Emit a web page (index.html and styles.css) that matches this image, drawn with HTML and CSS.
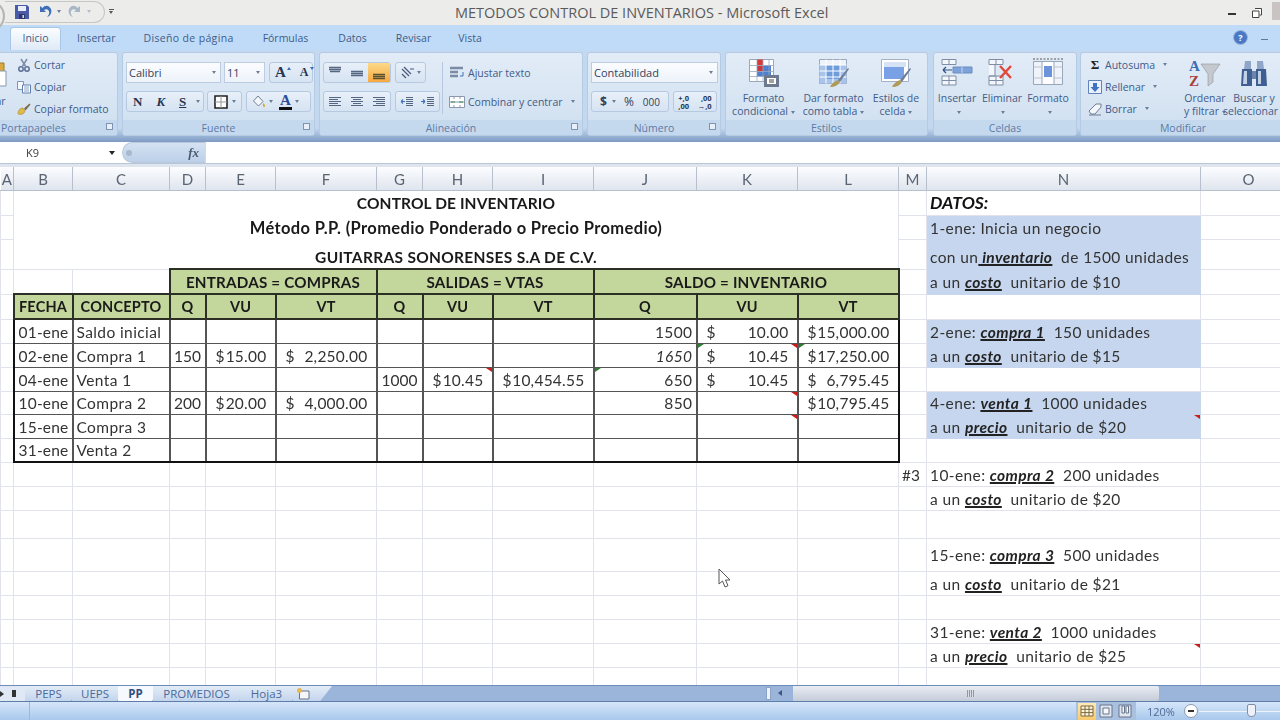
FILE: index.html
```
<!DOCTYPE html>
<html>
	<head>
		<title>METODOS CONTROL DE INVENTARIOS - Microsoft Excel</title>
		<link rel="stylesheet" href="styles.css">
	</head>

	<body>
		<div class="ventana">

			<!-- barra de titulo -->
			<div class="titulo">
				<i class="office"></i>
				<div class="acceso">
					<svg class="ic14" viewBox="0 0 14 14"><path d="M0 0h12l2 2v12H0z" fill="#4a5aa6"/><path d="M3 1h8v5H3z" fill="#e8eef8"/><path d="M4 9h6v5H4z" fill="#30386e"/><path d="M7.500 10h1.500v3H7.500z" fill="#cfd6ea"/></svg>
					<svg class="ic14 m-undo" viewBox="0 0 14 14"><path d="M2 1v6h6L6 5c3-2 6 0 5 4-.3 1-1 2-2 3 4-1 5-5 4-8C11 0 7-.5 4.500 3z" fill="#3f6fb8"/></svg>
					<i class="flechita"></i>
					<svg class="ic14 m-redo" viewBox="0 0 14 14"><path d="M12 1v6H6l2-2C5 3 2 5 3 9c.3 1 1 2 2 3C1 11 0 7 1 4c2-4 6-4.500 8.500-1z" fill="#a9b6c8"/></svg>
					<i class="flechita claro"></i>
				</div>
				<div class="personalizar"><i></i><i class="flechita"></i></div>
				<div class="nombre">METODOS CONTROL DE INVENTARIOS - Microsoft Excel</div>
				<div class="ventana-btns">
					<i class="minimizar"></i>
					<svg class="restaurar" viewBox="0 0 10 10"><path d="M3 .5h6.500V7H7.500M.5 3H7v6.500H.5z" fill="#fff" stroke="#444"/></svg>
					<i class="cerrar"></i>
				</div>
			</div>

			<!-- pestañas -->
			<div class="pestanas">
				<span class="pes activa">Inicio</span>
				<span class="pes p-ins">Insertar</span>
				<span class="pes p-dis">Diseño de página</span>
				<span class="pes p-for">Fórmulas</span>
				<span class="pes p-dat">Datos</span>
				<span class="pes p-rev">Revisar</span>
				<span class="pes p-vis">Vista</span>
				<span class="ayuda">?</span>
				<i class="min-cinta"></i>
			</div>

			<!-- cinta -->
			<div class="cinta">

				<div class="grupo g-port">
					<div class="cuerpo port">
						<div class="pegar">
							<svg class="ic-g" viewBox="0 0 32 30"><path d="M2 6h26v22H2z" fill="#d9a93f" stroke="#9c7a2a"/><path d="M10 2h10v6H10z" fill="#8c95a5"/><path d="M14 14h16v15H14z" fill="#fff" stroke="#8a98ae"/></svg>
							<span>Pegar</span>
						</div>
						<div class="lista">
							<div class="item">
								<svg class="ic14" viewBox="0 0 14 14"><circle cx="4" cy="11" r="2.200" fill="none" stroke="#5b6f96" stroke-width="1.500"/><circle cx="10" cy="11" r="2.200" fill="none" stroke="#5b6f96" stroke-width="1.500"/><path d="M5 9 10 1M9 9 4 1" stroke="#7d8ca8" stroke-width="1.500"/></svg>
								Cortar
							</div>
							<div class="item">
								<svg class="ic14" viewBox="0 0 14 14"><path d="M.5 1.500h6v8h-6z" fill="#f4f7fb" stroke="#7f94b4"/><path d="M5.500 5h8v8h-8z" fill="#fff" stroke="#5f7fae"/><path d="M7 7h5M7 9h5M7 11h5" stroke="#8aa3c6"/></svg>
								Copiar
							</div>
							<div class="item">
								<svg class="ic14" viewBox="0 0 14 14"><path d="M1 12c0-4 2-6 5-6l2 3c-1 3-3 4-7 3z" fill="#e0b94c" stroke="#a98a2c" stroke-width=".6"/><path d="M7 6.500 12.500 1.500l1 1L8.500 8.500z" fill="#7a6a4a"/></svg>
								Copiar formato
							</div>
						</div>
					</div>
					<div class="etiqueta">Portapapeles<i class="lanzador"></i></div>
				</div>

				<div class="grupo g-fuente">
					<div class="cuerpo filas">
						<div class="fila">
							<div class="combo c-fuente">Calibri<i class="flechita"></i></div>
							<div class="combo c-tam">11<i class="flechita"></i></div>
							<div class="caja c-ab">
								<b class="serif g">A</b><i class="sube"></i>
								<b class="serif p">A</b><i class="baja-t"></i>
							</div>
						</div>
						<div class="fila">
							<div class="caja c-nks">
								<b class="serif">N</b><b class="serif it">K</b><b class="serif sub">S</b><i class="flechita"></i>
							</div>
							<div class="caja c-borde">
								<svg class="ic14" viewBox="0 0 14 14"><path d="M1 1h12v12H1z" fill="#fff" stroke="#222" stroke-width="1.600"/><path d="M7 1v12M1 7h12" stroke="#999"/></svg>
								<i class="flechita"></i>
							</div>
							<div class="caja c-color">
								<svg class="ic14" viewBox="0 0 14 14"><path d="M6 1 1.500 6l5 5L11 6.500z" fill="#f5f7fb" stroke="#6d7f99"/><path d="M11.500 8c1 1.500 1.500 2 1.500 3s-1.500 1.500-2 0 0-2 .5-3z" fill="#e0a32e"/></svg>
								<i class="flechita"></i>
								<span class="a-color"><b class="serif">A</b></span>
								<i class="flechita"></i>
							</div>
						</div>
					</div>
					<div class="etiqueta">Fuente<i class="lanzador"></i></div>
				</div>

				<div class="grupo g-alin">
					<div class="cuerpo dos">
						<div class="filas">
							<div class="fila">
								<div class="caja c-alin">
									<span class="ali"><svg class="ic14" viewBox="0 0 14 14"><path d="M1 1.500h12M1 3.500h12M2 5.500h10" stroke="#556680" stroke-width="1.300"/></svg></span>
									<span class="ali"><svg class="ic14" viewBox="0 0 14 14"><path d="M1 5.500h12M1 7.500h12M1 9.500h12" stroke="#556680" stroke-width="1.300"/></svg></span>
									<span class="ali sel"><svg class="ic14" viewBox="0 0 14 14"><path d="M1 8.500h12M1 10.500h12M1 12.500h12" stroke="#5b5232" stroke-width="1.300"/></svg></span>
								</div>
								<div class="caja c-orient">
									<svg class="ic14" viewBox="0 0 14 14"><path d="M1 3 8 10M3 1 10 8M1 8l4 4" stroke="#4e5d78" stroke-width="1.300"/><path d="M9 3h4" stroke="#7b8aa5" stroke-width="1.300"/></svg>
									<i class="flechita"></i>
								</div>
							</div>
							<div class="fila">
								<div class="caja c-alin">
									<span class="ali"><svg class="ic14" viewBox="0 0 14 14"><path d="M1 2.500h12M1 4.500h9M1 6.500h12M1 8.500h9M1 10.500h12" stroke="#556680" stroke-width="1.100"/></svg></span>
									<span class="ali"><svg class="ic14" viewBox="0 0 14 14"><path d="M1 2.500h12M3 4.500h8M1 6.500h12M3 8.500h8M1 10.500h12" stroke="#556680" stroke-width="1.100"/></svg></span>
									<span class="ali"><svg class="ic14" viewBox="0 0 14 14"><path d="M1 2.500h12M4 4.500h9M1 6.500h12M4 8.500h9M1 10.500h12" stroke="#556680" stroke-width="1.100"/></svg></span>
								</div>
								<div class="caja c-sangria">
									<span class="ali"><svg class="ic14" viewBox="0 0 14 14"><path d="M6 2.500h7M6 4.500h7M6 6.500h7M6 8.500h7M6 10.500h7" stroke="#556680" stroke-width="1.100"/><path d="M5 6.500H1M1 6.500l2-2M1 6.500l2 2" stroke="#3f73b8" stroke-width="1.100"/></svg></span>
									<span class="ali"><svg class="ic14" viewBox="0 0 14 14"><path d="M6 2.500h7M6 4.500h7M6 6.500h7M6 8.500h7M6 10.500h7" stroke="#556680" stroke-width="1.100"/><path d="M0 6.500h4M4 6.500l-2-2M4 6.500l-2 2" stroke="#3f73b8" stroke-width="1.100"/></svg></span>
								</div>
							</div>
						</div>
						<div class="separador"></div>
						<div class="filas">
							<div class="fila item">
								<svg class="ic16" viewBox="0 0 16 14"><path d="M1 2h13M1 6h8M1 10h8" stroke="#7d8ca6" stroke-width="2.600"/><path d="M14 6v4h-3" fill="none" stroke="#3f73b8"/></svg>
								Ajustar texto
							</div>
							<div class="fila item">
								<svg class="ic16" viewBox="0 0 16 14"><path d="M.5 1.500h15v11H.5z" fill="#fff" stroke="#8a98ae"/><path d="M.5 7h15M5 1.500V4M11 1.500V4M5 10v2.500M11 10v2.500" stroke="#8a98ae"/><path d="M2 7h4M14 7h-4" stroke="#3a8a4a" stroke-width="1.200"/></svg>
								Combinar y centrar<i class="flechita"></i>
							</div>
						</div>
					</div>
					<div class="etiqueta">Alineación<i class="lanzador"></i></div>
				</div>

				<div class="grupo g-num">
					<div class="cuerpo filas">
						<div class="fila">
							<div class="combo c-formato">Contabilidad<i class="flechita"></i></div>
						</div>
						<div class="fila">
							<div class="caja c-mon"><b>$</b><i class="flechita"></i><span class="pct">%</span><span class="mil">000</span></div>
							<div class="caja c-dec"><span>+,0<br>,00</span><span>,00<br>→,0</span></div>
						</div>
					</div>
					<div class="etiqueta">Número<i class="lanzador"></i></div>
				</div>

				<div class="grupo g-est">
					<div class="cuerpo grandes">
						<div class="grande b-cond">
							<svg class="ic-g" viewBox="0 0 32 30"><path d="M1.500 1.500h24v22h-24z" fill="#fff" stroke="#9aa8bc"/><path d="M9 1.500h6v6H9z" fill="#d83a3a"/><path d="M9 7.500h6v6H9z" fill="#c8383c"/><path d="M9 13.500h14v5H9zM15 7.500h8v6h-8z" fill="#4f7fd0"/><path d="M1.500 7.500h24M1.500 13.500h24M1.500 18.500h24M9 1.500v22M15 1.500v22M21 1.500v22" fill="none" stroke="#9aa8bc" stroke-width=".8"/><path d="M16 17h15v12H16z" fill="#6d7a8e"/><path d="M19 20h9v6h-9z" fill="#fff"/><path d="M21 22h5M21 24h5" stroke="#444"/></svg>
							<span>Formato<br>condicional<i class="flechita"></i></span>
						</div>
						<div class="grande b-tabla">
							<svg class="ic-g" viewBox="0 0 32 30"><path d="M1.500 1.500h27v24h-27z" fill="#eef3fa" stroke="#9aa8bc"/><path d="M1.500 7h27V25.500h-27z" fill="#a9c4ea"/><path d="M8 7h14v14H8z" fill="#6f9ddc"/><path d="M1.500 7h27M1.500 13h27M1.500 19h27M8 1.500v24M15 1.500v24M22 1.500v24" fill="none" stroke="#fff"/><path d="M12 29c2-4 5-6 8-7l2 2c-2 3-5 5-10 5z" fill="#b09a5a"/><path d="M20 22 30 10l1 1-9 13z" fill="#6f7f98"/></svg>
							<span>Dar formato<br>como tabla<i class="flechita"></i></span>
						</div>
						<div class="grande b-celda">
							<svg class="ic-g" viewBox="0 0 32 30"><path d="M1.500 1.500h27v22h-27z" fill="#fff" stroke="#a4b1c4"/><path d="M4 4h22v5H4z" fill="#d6e3f6"/><path d="M4 9h20v12H4z" fill="#7aa0e6"/><path d="M12 29c2-4 5-6 8-7l2 2c-2 3-5 5-10 5z" fill="#b09a5a"/><path d="M20 22 30 10l1 1-9 13z" fill="#6f7f98"/></svg>
							<span>Estilos de<br>celda<i class="flechita"></i></span>
						</div>
					</div>
					<div class="etiqueta">Estilos</div>
				</div>

				<div class="grupo g-cel">
					<div class="cuerpo grandes">
						<div class="grande b-ins">
							<svg class="ic-g" viewBox="0 0 32 30"><path d="M1 1.500h14v5H1zM1 18h14v9H1z" fill="#f3f6fb" stroke="#7f8ea6"/><path d="M8 18v9M1 22.500h14M8 1.500v5" stroke="#7f8ea6"/><path d="M12 9h19v6H12z" fill="#7ea3da" stroke="#6a8cc2"/><path d="M21 9v6" stroke="#c6d6ef"/><path d="M11 12H2M2 12l3-3M2 12l3 3" fill="none" stroke="#30507f" stroke-width="1.200"/></svg>
							<span>Insertar<br><i class="flechita"></i></span>
						</div>
						<div class="grande b-eli">
							<svg class="ic-g" viewBox="0 0 32 30"><path d="M3 1.500h14v5H3zM3 18h14v9H3zM3 6.500h6V18H3" fill="#f3f6fb" stroke="#7f8ea6"/><path d="M10 18v9M3 22.500h14M10 1.500v5" stroke="#7f8ea6"/><path d="M14 8l11 12M25 8 14 20" stroke="#e0483a" stroke-width="2.400"/></svg>
							<span>Eliminar<br><i class="flechita"></i></span>
						</div>
						<div class="grande b-fmt">
							<svg class="ic-g" viewBox="0 0 32 30"><path d="M1 1h30" stroke="#555" stroke-dasharray="2 1.500"/><path d="M1.500 3.500h29v23h-29z" fill="#f0f4fa" stroke="#98a6ba"/><path d="M10 3.500h12v23H10z" fill="#fff" stroke="#98a6ba"/><path d="M12 8h8v11h-8z" fill="#6c94dd"/><path d="M1.500 9h8M1.500 20h8M22 9h8.500M22 20h8.500" stroke="#b6c2d2"/></svg>
							<span>Formato<br><i class="flechita"></i></span>
						</div>
					</div>
					<div class="etiqueta">Celdas</div>
				</div>

				<div class="grupo g-mod">
					<div class="cuerpo mod">
						<div class="lista">
							<div class="item"><b class="serif sigma">Σ</b>Autosuma<i class="flechita"></i></div>
							<div class="item">
								<svg class="ic14" viewBox="0 0 14 14"><path d="M.5.5h13v13H.5z" fill="#eaf1fb" stroke="#5f83bb"/><path d="M5 3h4v4h2.500L7 12 2.500 7H5z" fill="#3e72c4"/></svg>
								Rellenar<i class="flechita"></i>
							</div>
							<div class="item">
								<svg class="ic14" viewBox="0 0 14 14"><path d="M1 9 8 2h5v3l-6 7H3z" fill="#f4f6fa" stroke="#6f7d92"/><path d="M1 13h12" stroke="#6f7d92"/></svg>
								Borrar<i class="flechita"></i>
							</div>
						</div>
						<div class="grande b-ord">
							<svg class="ic-g" viewBox="0 0 32 30"><text x="0" y="13" class="az a1">A</text><text x="0" y="28" class="az a2">Z</text><path d="M12 6h19l-7 10v8l-5 4V16z" fill="#c4c9cf" stroke="#8d949c" stroke-width=".6"/></svg>
							<span>Ordenar<br>y filtrar<i class="flechita"></i></span>
						</div>
						<div class="grande b-bus">
							<svg class="ic-g" viewBox="0 0 32 30"><path d="M4 11h10v17H3zM18 11h10l1 17H18z" fill="#3f5f92"/><path d="M7 3h6v8H6zM19 3h6l1 8h-7z" fill="#8fa6c8"/><path d="M14 13h4v8h-4z" fill="#6c86ad"/><path d="M6 13h3v13H5z" fill="#c2d1e6"/><path d="M20 13h3v13h-3z" fill="#c2d1e6"/></svg>
							<span>Buscar y<br>seleccionar<i class="flechita"></i></span>
						</div>
					</div>
					<div class="etiqueta">Modificar</div>
				</div>

			</div>

			<!-- barra de formulas -->
			<div class="formulas">
				<div class="nombre-celda">K9<i class="flecha-negra"></i></div>
				<div class="fx-pill"><i class="punto"></i><span>fx</span></div>
				<div class="entrada"></div>
			</div>

			<!-- hoja -->
			<div class="hoja">
				<table>
					<colgroup>
						<col class="w13"><col class="w59"><col class="w97"><col class="w36"><col class="w70"><col class="w101"><col class="w46"><col class="w70"><col class="w101"><col class="w103"><col class="w101"><col class="w101"><col class="w28"><col class="w274"><col class="w96">
					</colgroup>
					<tr class="cab"><th>A</th><th>B</th><th>C</th><th>D</th><th>E</th><th>F</th><th>G</th><th>H</th><th>I</th><th>J</th><th>K</th><th>L</th><th>M</th><th>N</th><th>O</th></tr>

					<tr class="h25"><td></td><td colspan="11" class="tit">CONTROL DE INVENTARIO</td><td></td><td class="datos">DATOS:</td><td></td></tr>
					<tr class="h24"><td></td><td colspan="11" class="tit metodo">Método P.P. (Promedio Ponderado o Precio Promedio)</td><td></td><td class="azul">1-ene: Inicia un negocio</td><td></td></tr>
					<tr class="h30"><td></td><td colspan="11" class="tit baja">GUITARRAS SONORENSES S.A DE C.V.</td><td></td><td class="azul baja">con un<u class="k"> inventario</u>  de 1500 unidades</td><td></td></tr>
					<tr class="h25"><td></td><td></td><td></td><td colspan="3" class="enc">ENTRADAS = COMPRAS</td><td colspan="3" class="enc">SALIDAS = VTAS</td><td colspan="3" class="enc">SALDO = INVENTARIO</td><td></td><td class="azul">a un <u class="k">costo</u>  unitario de $10</td><td></td></tr>
					<tr class="h25 sub-enc"><td></td><td class="enc">FECHA</td><td class="enc">CONCEPTO</td><td class="enc">Q</td><td class="enc">VU</td><td class="enc">VT</td><td class="enc">Q</td><td class="enc">VU</td><td class="enc">VT</td><td class="enc">Q</td><td class="enc">VU</td><td class="enc">VT</td><td></td><td></td><td></td></tr>

					<tr class="h24">
						<td></td><td class="d ini">01-ene</td><td class="d">Saldo inicial</td><td class="d"></td><td class="d"></td><td class="d"></td><td class="d"></td><td class="d"></td><td class="d"></td>
						<td class="d num">1500</td><td class="d"><span class="con"><span>$</span><span>10.00</span></span></td><td class="d fin"><span class="con"><span>$</span><span>15,000.00</span></span></td>
						<td></td><td class="azul">2-ene: <u class="k">compra 1</u>  150 unidades</td><td></td>
					</tr>
					<tr class="h24">
						<td></td><td class="d ini">02-ene</td><td class="d">Compra 1</td><td class="d num c">150</td><td class="d"><span class="con"><span>$</span><span>15.00</span></span></td><td class="d"><span class="con"><span>$</span><span>2,250.00</span></span></td><td class="d"></td><td class="d"></td><td class="d"></td>
						<td class="d num it">1650</td><td class="d"><i class="tri verde izq"></i><i class="tri rojo"></i><span class="con"><span>$</span><span>10.45</span></span></td><td class="d fin"><i class="tri verde izq"></i><span class="con"><span>$</span><span>17,250.00</span></span></td>
						<td></td><td class="azul">a un <u class="k">costo</u>  unitario de $15</td><td></td>
					</tr>
					<tr class="h24">
						<td></td><td class="d ini">04-ene</td><td class="d">Venta 1</td><td class="d"></td><td class="d"></td><td class="d"></td><td class="d num c">1000</td><td class="d"><i class="tri rojo"></i><span class="con"><span>$</span><span>10.45</span></span></td><td class="d"><span class="con"><span>$</span><span>10,454.55</span></span></td>
						<td class="d num"><i class="tri verde izq"></i>650</td><td class="d"><span class="con"><span>$</span><span>10.45</span></span></td><td class="d fin"><span class="con"><span>$</span><span>6,795.45</span></span></td>
						<td></td><td></td><td></td>
					</tr>
					<tr class="h23">
						<td></td><td class="d ini">10-ene</td><td class="d">Compra 2</td><td class="d num c">200</td><td class="d"><span class="con"><span>$</span><span>20.00</span></span></td><td class="d"><span class="con"><span>$</span><span>4,000.00</span></span></td><td class="d"></td><td class="d"></td><td class="d"></td>
						<td class="d num">850</td><td class="d"><i class="tri rojo"></i></td><td class="d fin"><span class="con"><span>$</span><span>10,795.45</span></span></td>
						<td></td><td class="azul">4-ene: <u class="k">venta 1</u>  1000 unidades</td><td></td>
					</tr>
					<tr class="h24 negra">
						<td></td><td class="d ini">15-ene</td><td class="d">Compra 3</td><td class="d"></td><td class="d"></td><td class="d"></td><td class="d"></td><td class="d"></td><td class="d"></td>
						<td class="d"></td><td class="d"><i class="tri rojo"></i></td><td class="d fin"></td>
						<td></td><td class="azul"><i class="tri rojo"></i>a un <u class="k">precio</u>  unitario de $20</td><td></td>
					</tr>
					<tr class="h24 ultima">
						<td></td><td class="d ini">31-ene</td><td class="d">Venta 2</td><td class="d"></td><td class="d"></td><td class="d"></td><td class="d"></td><td class="d"></td><td class="d"></td>
						<td class="d"></td><td class="d"></td><td class="d fin"></td>
						<td></td><td></td><td></td>
					</tr>

					<tr class="h24"><td></td><td></td><td></td><td></td><td></td><td></td><td></td><td></td><td></td><td></td><td></td><td></td><td class="m">#3</td><td>10-ene: <u class="k">compra 2</u>  200 unidades</td><td></td></tr>
					<tr class="h24"><td></td><td></td><td></td><td></td><td></td><td></td><td></td><td></td><td></td><td></td><td></td><td></td><td></td><td>a un <u class="k">costo</u>  unitario de $20</td><td></td></tr>
					<tr class="h28"><td></td><td></td><td></td><td></td><td></td><td></td><td></td><td></td><td></td><td></td><td></td><td></td><td></td><td></td><td></td></tr>
					<tr class="h33"><td></td><td></td><td></td><td></td><td></td><td></td><td></td><td></td><td></td><td></td><td></td><td></td><td></td><td>15-ene: <u class="k">compra 3</u>  500 unidades</td><td></td></tr>
					<tr class="h24"><td></td><td></td><td></td><td></td><td></td><td></td><td></td><td></td><td></td><td></td><td></td><td></td><td></td><td>a un <u class="k">costo</u>  unitario de $21</td><td></td></tr>
					<tr class="h24"><td></td><td></td><td></td><td></td><td></td><td></td><td></td><td></td><td></td><td></td><td></td><td></td><td></td><td></td><td></td></tr>
					<tr class="h24"><td></td><td></td><td></td><td></td><td></td><td></td><td></td><td></td><td></td><td></td><td></td><td></td><td></td><td>31-ene: <u class="k">venta 2</u>  1000 unidades</td><td></td></tr>
					<tr class="h24"><td></td><td></td><td></td><td></td><td></td><td></td><td></td><td></td><td></td><td></td><td></td><td></td><td></td><td><i class="tri rojo"></i>a un <u class="k">precio</u>  unitario de $25</td><td></td></tr>
					<tr class="h24"><td></td><td></td><td></td><td></td><td></td><td></td><td></td><td></td><td></td><td></td><td></td><td></td><td></td><td></td><td></td></tr>
				</table>

				<svg class="cursor" viewBox="0 0 14 20"><path d="M1 1v15l3.500-3 2.500 6 3-1.300-2.500-5.700H12z" fill="#fff" stroke="#555"/></svg>
			</div>

			<!-- hojas y scroll -->
			<div class="barra-hojas">
				<div class="nav"><i class="tri-der"></i><i class="fin-der"></i></div>
				<div class="hoja-tab t1">PEPS</div>
				<div class="hoja-tab t2">UEPS</div>
				<div class="hoja-tab t3">PP</div>
				<div class="hoja-tab t4">PROMEDIOS</div>
				<div class="hoja-tab t5">Hoja3</div>
				<div class="hoja-tab t6">
					<svg class="ic14" viewBox="0 0 14 14"><path d="M3.500 4h9.500v8H3.500z" fill="#f4f6fa" stroke="#66758c"/><circle cx="3.500" cy="3.500" r="2.500" fill="#e9b64d"/></svg>
				</div>
				<div class="hueco"></div>
				<div class="divisor"></div>
				<i class="tri-izq"></i>
				<div class="scroll"><i class="agarre"></i></div>
			</div>

			<!-- estado -->
			<div class="estado">
				<i class="est-sep"></i>
				<div class="vistas">
					<span class="vista on"><svg class="ic14" viewBox="0 0 14 14"><path d="M1 2h12v10H1zM1 5.300h12M1 8.600h12M5 2v10M9 2v10" fill="#fff6d8" stroke="#7b6a45"/></svg></span>
					<span class="vista"><svg class="ic14" viewBox="0 0 14 14"><path d="M1 1h12v12H1z" fill="#dfe6f0" stroke="#66758c"/><path d="M4 4h6v6H4z" fill="#f7f9fc" stroke="#66758c"/></svg></span>
					<span class="vista"><svg class="ic14" viewBox="0 0 14 14"><path d="M1 1h12v12H1z" fill="#dfe6f0" stroke="#66758c"/><path d="M4 2h2.500v7H4zM8 2h2.500v7H8z" fill="#f7f9fc" stroke="#66758c"/></svg></span>
				</div>
				<span class="zoom-txt">120%</span>
				<span class="zoom-menos"></span>
				<div class="zoom-linea"><i class="zoom-pulgar"></i></div>
			</div>

		</div>
	</body>
</html>
```

FILE: styles.css
```
	html, body
	{
		margin: 0;
		padding: 0;
		background: #fff;
	}

	.ventana
	{
		width: 1280px;
		height: 720px;
		overflow: hidden;
		display: flex;
		flex-direction: column;
		font-family: "Open Sans", "Noto Sans", sans-serif;
		font-size: 10.5px;
		color: #3f5c88;
		filter: blur(0.4px);
	}

	i { font-style: normal; }

	svg { display: block; flex: none; }

	.ic14 { width: 14px; height: 14px; }
	.ic16 { width: 16px; height: 14px; }
	.ic-g { width: 32px; height: 30px; }

	.serif { font-family: "Liberation Serif", serif; }

	.flechita
	{
		display: inline-block;
		width: 0;
		height: 0;
		margin-left: 5px;
		vertical-align: middle;
		border-left: 2.500px solid transparent;
		border-right: 2.500px solid transparent;
		border-top: 3px solid #6b7d98;
	}

	.flechita.claro { border-top-color: #b3bdcb; }

	/* titulo */
	.titulo
	{
		height: 25px;
		flex: none;
		display: flex;
		align-items: center;
		position: relative;
		background: #ececea;
	}

	.office
	{
		position: absolute;
		left: -27px;
		top: 0;
		width: 28px;
		height: 28px;
		border-radius: 50%;
		border: 2px solid #b5b5b3;
		background: #ececea;
	}

	.acceso
	{
		width: 100px;
		height: 22px;
		margin-left: 5px;
		margin-top: -2px;
		padding-left: 10px;
		box-sizing: border-box;
		display: flex;
		align-items: center;
		border: 1px solid #c6c6c4;
		border-left: 0;
		border-radius: 0 12px 12px 0;
	}

	.m-undo { margin-left: 9px; }
	.m-redo { margin-left: 7px; }

	.personalizar { width: 8px; margin-left: 4px; margin-top: -2px; }
	.personalizar i:first-child { display: block; width: 5px; height: 1px; background: #555; margin-bottom: 1px; }
	.personalizar .flechita { display: block; margin-left: 0; border-top-color: #555; }

	.nombre
	{
		width: 373px;
		margin-left: 338px;
		font-size: 14.500px;
		color: #5a5a5a;
		white-space: nowrap;
		text-align: center;
	}

	.ventana-btns
	{
		margin-left: auto;
		display: flex;
		align-items: center;
	}

	.minimizar { width: 8px; height: 2px; margin-top: 3px; background: #333; }
	.restaurar { width: 10px; height: 10px; margin-left: 16px; }
	.cerrar { width: 8px; height: 18px; margin-left: 10px; margin-top: -4px; background: #c9c4c2; }

	/* pestañas */
	.pestanas
	{
		height: 25px;
		flex: none;
		display: flex;
		align-items: center;
		background: #bfdbf8;
		font-size: 10.5px;
	}

	.pes { white-space: nowrap; }

	.pes.activa
	{
		width: 49px;
		height: 22px;
		margin-left: 11px;
		margin-top: 3px;
		line-height: 21px;
		text-align: center;
		background: linear-gradient(#fbfdff, #dfeaf7);
		border-radius: 3px 3px 0 0;
		box-shadow: 0 0 0 1px #a9c6e6;
	}

	.p-ins { margin-left: 17px; }
	.p-dis { margin-left: 28px; letter-spacing: .35px; }
	.p-for { margin-left: 29px; }
	.p-dat { margin-left: 30px; }
	.p-rev { margin-left: 29px; }
	.p-vis { margin-left: 27px; }

	.ayuda
	{
		width: 13px;
		height: 13px;
		margin-left: auto;
		border-radius: 50%;
		background: #4a78c4;
		border: 1px solid #9fb8db;
		color: #fff;
		font-size: 9px;
		font-weight: 700;
		line-height: 13px;
		text-align: center;
	}

	.min-cinta { width: 7px; height: 1px; margin: 3px 12px 0 13px; background: #66788f; }

	/* cinta */
	.cinta
	{
		height: 92px;
		flex: none;
		box-sizing: border-box;
		padding-top: 2px;
		display: flex;
		background: linear-gradient(#c2d9f1, #c3d8ee 85%, #8aa6cc 97%, #7f9bc3);
		white-space: nowrap;
	}

	.grupo
	{
		height: 84px;
		flex: none;
		box-sizing: border-box;
		margin-right: 4px;
		display: flex;
		flex-direction: column;
		border: 1px solid #b5cbe3;
		border-radius: 3px;
		background: linear-gradient(#e2ecf7, #cfdff0);
		overflow: hidden;
	}

	.g-port { width: 144px; margin-left: -26px; }
	.g-fuente { width: 193px; }
	.g-alin { width: 264px; }
	.g-num { width: 134px; }
	.g-est { width: 203px; margin-right: 5px; }
	.g-cel { width: 144px; margin-right: 3px; }
	.g-mod { width: 205px; margin-right: 0; border-right: 0; }

	.cuerpo { height: 67px; flex: none; box-sizing: border-box; }

	.etiqueta
	{
		flex: 1;
		position: relative;
		padding-top: 1px;
		line-height: 14px;
		text-align: center;
		background: #c5d9ee;
		color: #5c7ba6;
	}

	.g-port .etiqueta { text-align: left; padding-left: 26px; }

	.lanzador
	{
		position: absolute;
		right: 4px;
		top: 3px;
		width: 5px;
		height: 5px;
		border: 1px solid #7f94b4;
		background: #e8eff8;
	}

	.cuerpo.port { display: flex; }

	.pegar
	{
		width: 33px;
		flex: none;
		padding-top: 4px;
		box-sizing: border-box;
		display: flex;
		flex-direction: column;
		align-items: center;
		line-height: 13px;
	}

	.pegar span { margin-top: 8px; }

	.lista
	{
		display: flex;
		flex-direction: column;
		gap: 7px;
		padding: 4px 0 0 9px;
	}

	.item
	{
		height: 15px;
		display: flex;
		align-items: center;
		gap: 3px;
		white-space: nowrap;
		font-size: 10.5px;
	}

	.item .flechita { margin-left: 5px; }

	.filas
	{
		display: flex;
		flex-direction: column;
		gap: 8px;
		padding: 9px 0 0 3px;
	}

	.fila { height: 21px; display: flex; gap: 3px; }

	.combo
	{
		height: 21px;
		box-sizing: border-box;
		padding-left: 2px;
		display: flex;
		align-items: center;
		justify-content: space-between;
		background: linear-gradient(#fbfcfe, #edf3fa);
		border: 1px solid #bccde2;
		color: #33425c;
		font-size: 11px;
	}

	.combo .flechita { margin-right: 4px; }

	.c-fuente { width: 95px; }
	.c-tam { width: 41px; }
	.c-formato { width: 127px; }

	.caja
	{
		height: 21px;
		box-sizing: border-box;
		display: flex;
		align-items: center;
		border: 1px solid #b6c9e0;
		border-radius: 3px;
		background: linear-gradient(#e8f0f9, #d6e3f2);
		color: #26344e;
	}

	.c-ab { width: 44px; margin-left: 1px; padding-left: 5px; }
	.c-ab .g { font-size: 15px; }
	.c-ab .p { font-size: 12px; margin-left: 9px; }

	.sube, .baja-t
	{
		width: 0;
		height: 0;
		margin: -9px 0 0 1px;
		border-left: 2px solid transparent;
		border-right: 2px solid transparent;
	}

	.sube { border-bottom: 3px solid #3b6cb5; }
	.baja-t { border-top: 3px solid #3b6cb5; }

	.c-nks { width: 78px; padding-left: 6px; gap: 14px; font-size: 13px; }
	.c-nks .flechita { margin-left: -4px; }
	.it { font-style: italic; }
	.sub { text-decoration: underline; }

	.c-borde { width: 35px; padding-left: 6px; }
	.c-borde .flechita { margin-left: 4px; }

	.c-color { width: 65px; padding-left: 5px; margin-left: 1px; }
	.c-color .flechita { margin-left: 3px; }

	.a-color
	{
		margin-left: 6px;
		padding: 0 1px;
		line-height: 13px;
		font-size: 15px;
		color: #2a4a9a;
		border-bottom: 3px solid #111;
	}

	.cuerpo.dos { display: flex; }

	.c-alin { width: 68px; }
	.ali { width: 22px; height: 19px; display: flex; align-items: center; justify-content: center; }
	.ali.sel { background: linear-gradient(#fcd98a, #f7a93f); }
	.c-orient { width: 31px; padding-left: 5px; margin-left: 1px; }
	.c-orient .flechita { margin-left: 2px; }
	.c-sangria { width: 45px; margin-left: 1px; }

	.separador { width: 1px; height: 52px; margin: 9px 6px 0 2px; background: #b5c8df; }

	.g-alin .filas:last-child { padding-left: 0; gap: 8px; }
	.g-alin .item { height: 21px; }

	.c-mon { width: 78px; padding-left: 8px; color: #33425c; }
	.c-mon b { font-size: 12px; }
	.pct { margin-left: 8px; font-size: 12px; }
	.mil { margin-left: 9px; font-size: 10px; }
	.c-dec { width: 44px; margin-left: 1px; justify-content: space-around; }
	.c-dec span { font-size: 7.500px; line-height: 8px; font-weight: 700; text-align: right; }

	.grandes { display: flex; padding-top: 5px; }

	.grande
	{
		display: flex;
		flex-direction: column;
		align-items: center;
		text-align: center;
		line-height: 13px;
		flex: none;
	}

	.grande span { margin-top: 4px; }
	.grande .flechita { margin-left: 3px; }

	.b-cond { width: 75px; }
	.b-tabla { width: 65px; }
	.b-celda { width: 60px; }
	.b-ins { width: 46px; }
	.b-eli { width: 44px; }
	.b-fmt { width: 48px; }

	.cuerpo.mod { display: flex; }
	.mod .lista { width: 101px; flex: none; padding-left: 7px; box-sizing: border-box; }
	.sigma { width: 14px; font-size: 13px; color: #222; text-align: center; }

	.mod .grande { padding-top: 5px; box-sizing: border-box; }
	.b-ord { width: 46px; }
	.b-bus { width: 50px; margin-left: 1px; }

	.az { font-family: "Liberation Serif", serif; font-size: 15px; font-weight: 700; }
	.a1 { fill: #3d6cb5; }
	.a2 { fill: #a8403a; }

	/* formulas */
	.formulas
	{
		height: 21px;
		flex: none;
		display: flex;
		background: #fff;
		color: #333;
		border-bottom: 1px solid #b9c6d8;
		margin-bottom: 3px;
		box-shadow: 0 3px 0 #dfe5ee;
	}

	.nombre-celda
	{
		width: 118px;
		box-sizing: border-box;
		padding-left: 26px;
		display: flex;
		align-items: center;
		justify-content: space-between;
		font-size: 11px;
		color: #3b3b3b;
	}

	.flecha-negra
	{
		width: 0;
		height: 0;
		border-left: 3.500px solid transparent;
		border-right: 3.500px solid transparent;
		border-top: 4px solid #222;
		margin-right: 3px;
	}

	.fx-pill
	{
		width: 83px;
		margin-left: 4px;
		display: flex;
		align-items: center;
		background: linear-gradient(#d4e2f3, #bcd0e8);
		border-radius: 12px 0 0 12px;
		border: 1px solid #b9c8dc;
		border-right: 0;
		box-sizing: border-box;
	}

	.punto { width: 6px; height: 6px; margin-left: 3px; border-radius: 50%; background: #a9b9cc; }

	.fx-pill span
	{
		margin-left: auto;
		margin-right: 6px;
		font-family: "Liberation Serif", serif;
		font-style: italic;
		font-weight: 700;
		font-size: 13px;
		color: #4a5a70;
	}

	.entrada { flex: 1; border-left: 1px solid #d3dbe6; }

	/* hoja */
	.hoja
	{
		height: 518px;
		flex: none;
		overflow: hidden;
		position: relative;
		background: #fff;
	}

	table
	{
		width: 1296px;
		table-layout: fixed;
		border-collapse: collapse;
		font-family: Lato, "Open Sans", sans-serif;
		font-size: 15.500px;
		letter-spacing: .4px;
		color: #333;
		line-height: 16px;
	}

	.w13 { width: 13px; }
	.w59 { width: 59px; }
	.w97 { width: 97px; }
	.w36 { width: 36px; }
	.w70 { width: 70px; }
	.w101 { width: 101px; }
	.w46 { width: 46px; }
	.w103 { width: 103px; }
	.w28 { width: 28px; }
	.w274 { width: 274px; }
	.w96 { width: 96px; }

	.cab { height: 23px; }

	th
	{
		padding: 1px 0 0;
		font-weight: 400;
		font-size: 15px;
		letter-spacing: 0;
		color: #5a6472;
		background: linear-gradient(#fbfcfe, #dfe5ee);
		border-right: 1px solid #b7c0cc;
		border-bottom: 1px solid #b7c0cc;
	}

	td
	{
		padding: 1px 3px 0;
		position: relative;
		border: 1px solid #e0e3eb;
		white-space: pre;
		overflow: visible;
	}

	.h23 { height: 23px; }
	.h24 { height: 24px; }
	.h25 { height: 25px; }
	.h28 { height: 28px; }
	.h30 { height: 30px; }
	.h33 { height: 33px; }

	.tit
	{
		border: 0;
		text-align: center;
		font-weight: 700;
		color: #1a1a1a;
		letter-spacing: .1px;
	}

	.tit.baja { letter-spacing: .3px; }

	.metodo { font-size: 16.500px; letter-spacing: .36px; }

	.baja { padding-top: 6px; }

	.datos
	{
		font-weight: 700;
		font-style: italic;
		font-size: 17.500px;
		letter-spacing: 0;
		color: #111;
	}

	.azul
	{
		background: #c5d6ee;
		border-color: #c5d6ee;
	}

	.k
	{
		font-weight: 700;
		font-style: italic;
		color: #222;
		text-decoration-thickness: 1.500px;
	}

	.enc
	{
		padding: 0;
		border: 2px solid #2b2f26;
		background: #c3d69b;
		text-align: center;
		font-weight: 700;
		font-size: 15.200px;
		letter-spacing: .2px;
		color: #1a1a1a;
	}

	.sub-enc .enc { font-size: 14.500px; }

	.d
	{
		padding: 1px 2px 0 3px;
		border: 1px solid #555;
		border-left: 2px solid #555;
		border-right: 2px solid #555;
	}

	.ini { border-left: 2px solid #111; padding-left: 4px; letter-spacing: .2px; }
	.fin { border-right: 2px solid #111; }
	.negra .d { border-top: 1px solid #111; }
	.ultima .d { border-bottom: 2px solid #111; }

	.num { text-align: right; padding-right: 3px; }
	.num.c { text-align: center; padding: 1px 0 0; letter-spacing: 0; }

	.con
	{
		display: flex;
		justify-content: space-between;
		padding: 0 6px;
		letter-spacing: .25px;
	}

	.m { padding: 1px 0 0 3px; letter-spacing: 0; }

	.tri
	{
		position: absolute;
		top: 0;
		right: 0;
		width: 0;
		height: 0;
		border-style: solid;
	}

	.tri.rojo { border-width: 4px 0 0 6px; border-color: #c81e1e transparent transparent transparent; }
	.tri.verde { border-color: #2f7d32 transparent transparent transparent; border-width: 4px 6px 0 0; }
	.tri.izq { left: 0; right: auto; }

	.cursor
	{
		position: absolute;
		left: 718px;
		top: 401px;
		width: 14px;
		height: 20px;
	}

	/* hojas */
	.barra-hojas
	{
		height: 17px;
		flex: none;
		display: flex;
		align-items: stretch;
		box-sizing: border-box;
		background: #9bb5da;
		border-top: 1px solid #6e8cb8;
		border-bottom: 1px solid #5f7da8;
		font-size: 11.500px;
		color: #4a6a9a;
	}

	.nav { width: 25px; flex: none; display: flex; align-items: center; gap: 8px; background: #dfe8f4; }
	.tri-der { width: 0; height: 0; border-left: 4px solid #333; border-top: 3px solid transparent; border-bottom: 3px solid transparent; }
	.fin-der { width: 4px; height: 7px; border-left: 3px solid #333; border-right: 1px solid #333; box-sizing: border-box; }

	.hoja-tab
	{
		flex: none;
		box-sizing: border-box;
		position: relative;
		display: flex;
		align-items: center;
		justify-content: center;
		background: linear-gradient(#e3ecf7, #c3d5ec);
	}

	.hoja-tab::after
	{
		content: "";
		position: absolute;
		right: 0;
		top: 0;
		width: 1px;
		height: 15px;
		background: #7f9ac2;
		transform: skewX(-38deg);
		transform-origin: bottom;
	}

	.t1 { width: 47px; }
	.t2 { width: 46px; }
	.t3 { width: 35px; background: #f6f9fd; font-weight: 700; color: #33507f; }
	.t4 { width: 87px; }
	.t5 { width: 53px; }
	.t6 { width: 39px; justify-content: flex-start; padding-left: 3px; clip-path: polygon(0 0, 100% 0, 70% 100%, 0 100%); }

	.hueco { flex: 1; }

	.divisor { width: 5px; flex: none; margin: 1px 0; background: #eef2f8; border: 1px solid #8aa3c8; box-sizing: border-box; }

	.tri-izq
	{
		width: 0;
		height: 0;
		margin: 4px 11px 0 7px;
		border-right: 4px solid #3d587f;
		border-top: 3.500px solid transparent;
		border-bottom: 3.500px solid transparent;
		flex: none;
	}

	.scroll
	{
		width: 366px;
		margin-right: 121px;
		flex: none;
		position: relative;
		background: linear-gradient(#e9ecf2, #c4ccd9);
		border-radius: 0 2px 2px 0;
	}

	.agarre
	{
		position: absolute;
		left: 174px;
		top: 4px;
		width: 8px;
		height: 7px;
		background: repeating-linear-gradient(90deg, #8e97a6 0 1px, #d8dde6 1px 2px);
	}

	/* estado */
	.estado
	{
		height: 18px;
		flex: none;
		display: flex;
		align-items: center;
		background: linear-gradient(#d5e6fa, #a9c8ec);
		font-size: 11px;
		color: #4d6a95;
	}

	.est-sep { width: 1px; height: 18px; margin-left: 29px; background: #9bb8da; }

	.vistas
	{
		height: 18px;
		margin-left: 1046px;
		display: flex;
		align-items: center;
		background: #a9c0df;
		padding: 0 2px;
		gap: 1px;
	}

	.vista { width: 18px; height: 17px; display: flex; align-items: center; justify-content: center; }
	.vista.on { background: linear-gradient(#fde9b8, #f8c96d); }

	.zoom-txt { margin-left: 11px; }

	.zoom-menos
	{
		width: 14px;
		height: 14px;
		margin-left: 9px;
		flex: none;
		box-sizing: border-box;
		border-radius: 50%;
		border: 1px solid #8a9ab0;
		background: #fff;
		position: relative;
	}

	.zoom-menos::after
	{
		content: "";
		position: absolute;
		left: 3px;
		top: 5px;
		width: 6px;
		height: 2px;
		background: #333;
	}

	.zoom-linea
	{
		flex: 1;
		height: 1px;
		margin-left: 1px;
		position: relative;
		background: #eef3fa;
	}

	.zoom-pulgar
	{
		position: absolute;
		left: 48px;
		top: -7px;
		width: 9px;
		height: 13px;
		box-sizing: border-box;
		border: 1px solid #7f8ea6;
		border-radius: 2px 2px 4px 4px;
		background: #eef2f8;
	}
```
